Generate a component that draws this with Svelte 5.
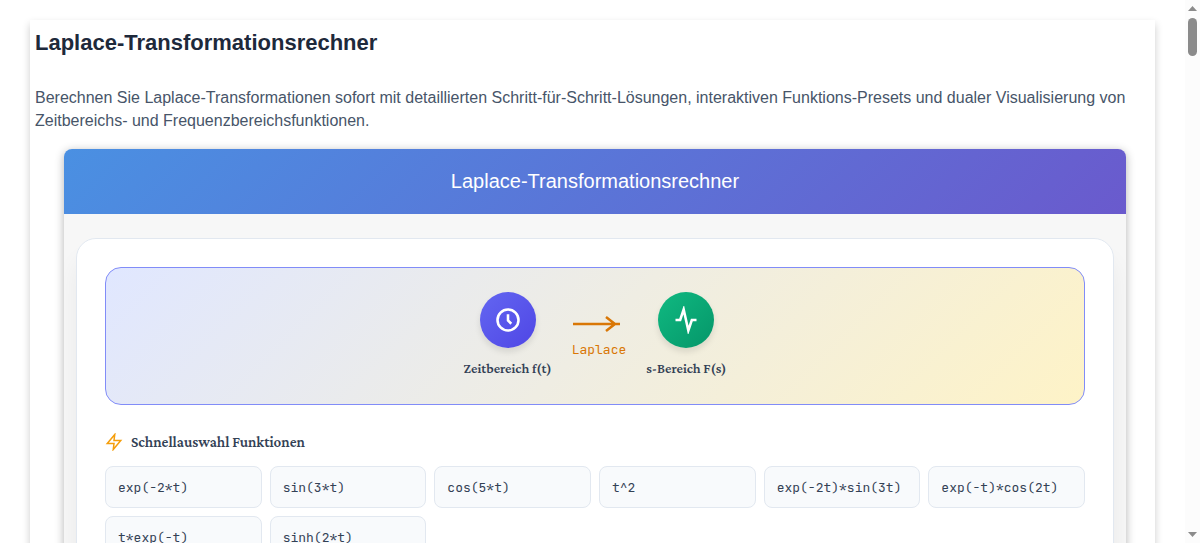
<script lang="ts">
  let expression = $state('');

  const presets = [
    'exp(-2*t)',
    'sin(3*t)',
    'cos(5*t)',
    't^2',
    'exp(-2t)*sin(3t)',
    'exp(-t)*cos(2t)',
    't*exp(-t)',
    'sinh(2*t)'
  ];

  function selectPreset(value: string) {
    expression = value;
  }
</script>

<div class="page">
  <main class="sheet">
    <h1>Laplace-Transformationsrechner</h1>
    <p class="intro">
      Berechnen Sie Laplace-Transformationen sofort mit detaillierten Schritt-für-Schritt-Lösungen,
      interaktiven Funktions-Presets und dualer Visualisierung von Zeitbereichs- und
      Frequenzbereichsfunktionen.
    </p>

    <section class="calculator">
      <h2 class="calculator-title">Laplace-Transformationsrechner</h2>
      <div class="calculator-body">
        <div class="card">
          <div class="flow">
            <div class="domain">
              <div class="circle time">
                <svg width="28" height="28" viewBox="0 0 24 24" aria-hidden="true">
                  <circle cx="12" cy="12" r="9" />
                  <path d="M12 7v5.4l2.8 2.8" />
                </svg>
              </div>
              <span class="domain-label">Zeitbereich f(t)</span>
            </div>
            <div class="arrow">
              <svg width="54" height="24" viewBox="0 0 54 24" aria-hidden="true">
                <path d="M1 12h47M34 5l9 7-9 7" />
              </svg>
              <span>Laplace</span>
            </div>
            <div class="domain">
              <div class="circle frequency">
                <svg width="28" height="28" viewBox="0 0 24 24" aria-hidden="true">
                  <path d="M3 12h4l3-9 4 18 3-9h4" />
                </svg>
              </div>
              <span class="domain-label">s-Bereich F(s)</span>
            </div>
          </div>

          <h3 class="presets-title">
            <svg width="18" height="18" viewBox="0 0 24 24" aria-hidden="true">
              <path d="M13 2L3 14h9l-1 8 10-12h-9l1-8z" />
            </svg>
            Schnellauswahl Funktionen
          </h3>
          <div class="presets">
            {#each presets as preset}
              <button
                type="button"
                class="preset"
                aria-pressed={expression === preset}
                onclick={() => selectPreset(preset)}
              >
                {preset}
              </button>
            {/each}
          </div>
        </div>
      </div>
    </section>
  </main>

  <div class="scrollbar" aria-hidden="true">
    <svg width="9" height="5" viewBox="0 0 9 5"><path d="M0 5L4.5 0 9 5z" /></svg>
    <div class="thumb"></div>
    <svg class="down" width="9" height="5" viewBox="0 0 9 5"><path d="M0 0L4.5 5 9 0z" /></svg>
  </div>
</div>

<style>
  :global(body) {
    background: #fff;
    font-family: 'Liberation Sans', Arial, sans-serif;
  }

  .page {
    display: flex;
    height: 100vh;
    overflow: hidden;
  }

  .sheet {
    flex: 1;
    min-width: 0;
    align-self: flex-start;
    margin: 20px 30px;
    padding: 5px;
    background: #fff;
    box-shadow: 0 4px 8px rgba(0, 0, 0, 0.2);
  }

  h1 {
    margin: 0;
    color: #1e293b;
    font-size: 22px;
    line-height: 36px;
  }

  .intro {
    margin: 25px 0 17px;
    color: #475569;
    font-size: 16px;
    line-height: 23px;
  }

  .calculator {
    margin: 0 24px 0 29px;
    border-radius: 8px;
    background: #f7f7f7;
    box-shadow: 0 2px 10px rgba(0, 0, 0, 0.3);
    overflow: hidden;
  }

  .calculator-title {
    margin: 0;
    padding: 20px;
    background: linear-gradient(135deg, #4a90e2, #6a5acd);
    color: #fff;
    font-size: 20px;
    font-weight: 400;
    line-height: 25px;
    text-align: center;
  }

  .calculator-body {
    padding: 24px 12px;
  }

  .card {
    padding: 28px;
    border: 1px solid #e2e8f0;
    border-radius: 20px;
    background: #fff;
    box-shadow: 0 20px 25px rgba(0, 0, 0, 0.06);
  }

  .flow {
    display: flex;
    align-items: center;
    justify-content: center;
    gap: 20px;
    margin-bottom: 24px;
    padding: 24px;
    border: 1px solid #818cf8;
    border-radius: 16px;
    background: linear-gradient(135deg, #e0e7ff, #fef3c7);
  }

  .domain {
    display: flex;
    flex-direction: column;
    align-items: center;
    gap: 8px;
  }

  .circle {
    display: flex;
    align-items: center;
    justify-content: center;
    width: 56px;
    height: 56px;
    border-radius: 50%;
    box-shadow: 0 4px 6px rgba(0, 0, 0, 0.1);
  }

  .time {
    background: linear-gradient(135deg, #6366f1, #4f46e5);
  }

  .frequency {
    background: linear-gradient(135deg, #10b981, #059669);
  }

  .circle svg {
    fill: none;
    stroke: #fff;
    stroke-width: 2.2;
  }

  .domain-label {
    color: #334155;
    font-family: 'Crimson Pro', 'Liberation Serif', serif;
    font-size: 14px;
    font-weight: 600;
    line-height: 24px;
  }

  .arrow {
    display: flex;
    flex-direction: column;
    align-items: center;
    gap: 4px;
    color: #d97706;
    font-family: 'JetBrains Mono', 'DejaVu Sans Mono', monospace;
    font-size: 13px;
    line-height: 20px;
  }

  .arrow svg {
    fill: none;
    stroke: currentColor;
    stroke-width: 2.5;
  }

  .presets-title {
    display: flex;
    align-items: center;
    gap: 8px;
    margin: 0 0 11px;
    color: #334155;
    font-family: 'Crimson Pro', 'Liberation Serif', serif;
    font-size: 15px;
    font-weight: 600;
    line-height: 26px;
  }

  .presets-title svg {
    fill: none;
    stroke: #f59e0b;
    stroke-width: 2;
  }

  .presets {
    display: grid;
    grid-template-columns: repeat(auto-fill, minmax(140px, 1fr));
    gap: 8px;
  }

  .preset {
    padding: 11px 12px 9px;
    border: 1px solid #e2e8f0;
    border-radius: 8px;
    background: #f8fafc;
    color: #334155;
    font-family: 'JetBrains Mono', 'DejaVu Sans Mono', monospace;
    font-size: 13px;
    line-height: 20px;
    text-align: left;
    cursor: pointer;
  }

  .preset:hover {
    border-color: #818cf8;
  }

  .scrollbar {
    display: flex;
    flex-direction: column;
    align-items: center;
    gap: 7px;
    box-sizing: border-box;
    width: 15px;
    padding: 6px 0;
    background: #fcfcfc;
  }

  .scrollbar svg {
    fill: #8b8b8b;
  }

  .thumb {
    width: 9px;
    height: 38px;
    border-radius: 5px;
    background: #8b8b8b;
  }

  .down {
    margin-top: auto;
  }
</style>
